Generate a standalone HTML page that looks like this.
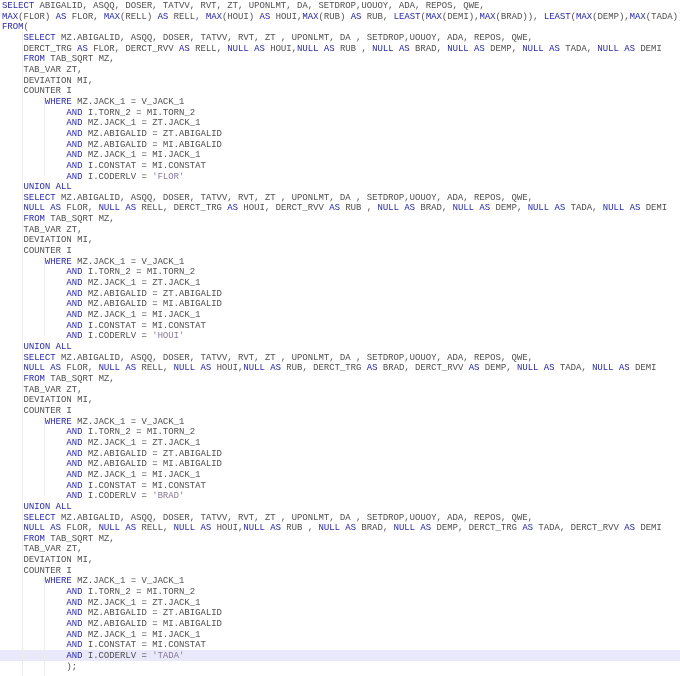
<!DOCTYPE html>
<html><head><meta charset="utf-8"><style>
html,body{margin:0;padding:0;background:#fff;width:680px;height:676px;overflow:hidden}
pre{margin:0;position:absolute;left:2px;top:1px;font-family:"Liberation Mono",monospace;font-size:8.95px;line-height:10.65px;color:#4f4f4f;white-space:pre}
b{font-weight:normal;color:#2a2aa8}
s{text-decoration:none;color:#8a7a9a}
.hl{position:absolute;left:0;top:650px;width:680px;height:11px;background:#e9e9fb}
.g{position:absolute;width:1px;background:#ececec}
</style></head><body>
<div class="hl"></div>
<div class="g" style="left:22px;top:32px;height:644px"></div>
<div class="g" style="left:44px;top:96px;height:80px"></div>
<div class="g" style="left:44px;top:256px;height:80px"></div>
<div class="g" style="left:44px;top:416px;height:80px"></div>
<div class="g" style="left:44px;top:576px;height:100px"></div>
<pre><b>SELECT</b> ABIGALID, ASQQ, DOSER, TATVV, RVT, ZT, UPONLMT, DA, SETDROP,UOUOY, ADA, REPOS, QWE,
<b>MAX</b>(FLOR) <b>AS</b> FLOR, <b>MAX</b>(RELL) <b>AS</b> RELL, <b>MAX</b>(HOUI) <b>AS</b> HOUI,<b>MAX</b>(RUB) <b>AS</b> RUB, <b>LEAST</b>(<b>MAX</b>(DEMI),<b>MAX</b>(BRAD)), <b>LEAST</b>(<b>MAX</b>(DEMP),<b>MAX</b>(TADA))
<b>FROM</b>(
    <b>SELECT</b> MZ.ABIGALID, ASQQ, DOSER, TATVV, RVT, ZT , UPONLMT, DA , SETDROP,UOUOY, ADA, REPOS, QWE,
    DERCT_TRG <b>AS</b> FLOR, DERCT_RVV <b>AS</b> RELL, <b>NULL AS</b> HOUI,<b>NULL AS</b> RUB , <b>NULL AS</b> BRAD, <b>NULL AS</b> DEMP, <b>NULL AS</b> TADA, <b>NULL AS</b> DEMI
    <b>FROM</b> TAB_SQRT MZ,
    TAB_VAR ZT,
    DEVIATION MI,
    COUNTER I
        <b>WHERE</b> MZ.JACK_1 = V_JACK_1
            <b>AND</b> I.TORN_2 = MI.TORN_2
            <b>AND</b> MZ.JACK_1 = ZT.JACK_1
            <b>AND</b> MZ.ABIGALID = ZT.ABIGALID
            <b>AND</b> MZ.ABIGALID = MI.ABIGALID
            <b>AND</b> MZ.JACK_1 = MI.JACK_1
            <b>AND</b> I.CONSTAT = MI.CONSTAT
            <b>AND</b> I.CODERLV = <s>'FLOR'</s>
    <b>UNION ALL</b>
    <b>SELECT</b> MZ.ABIGALID, ASQQ, DOSER, TATVV, RVT, ZT , UPONLMT, DA , SETDROP,UOUOY, ADA, REPOS, QWE,
    <b>NULL AS</b> FLOR, <b>NULL AS</b> RELL, DERCT_TRG <b>AS</b> HOUI, DERCT_RVV <b>AS</b> RUB , <b>NULL AS</b> BRAD, <b>NULL AS</b> DEMP, <b>NULL AS</b> TADA, <b>NULL AS</b> DEMI
    <b>FROM</b> TAB_SQRT MZ,
    TAB_VAR ZT,
    DEVIATION MI,
    COUNTER I
        <b>WHERE</b> MZ.JACK_1 = V_JACK_1
            <b>AND</b> I.TORN_2 = MI.TORN_2
            <b>AND</b> MZ.JACK_1 = ZT.JACK_1
            <b>AND</b> MZ.ABIGALID = ZT.ABIGALID
            <b>AND</b> MZ.ABIGALID = MI.ABIGALID
            <b>AND</b> MZ.JACK_1 = MI.JACK_1
            <b>AND</b> I.CONSTAT = MI.CONSTAT
            <b>AND</b> I.CODERLV = <s>'HOUI'</s>
    <b>UNION ALL</b>
    <b>SELECT</b> MZ.ABIGALID, ASQQ, DOSER, TATVV, RVT, ZT , UPONLMT, DA , SETDROP,UOUOY, ADA, REPOS, QWE,
    <b>NULL AS</b> FLOR, <b>NULL AS</b> RELL, <b>NULL AS</b> HOUI,<b>NULL AS</b> RUB, DERCT_TRG <b>AS</b> BRAD, DERCT_RVV <b>AS</b> DEMP, <b>NULL AS</b> TADA, <b>NULL AS</b> DEMI
    <b>FROM</b> TAB_SQRT MZ,
    TAB_VAR ZT,
    DEVIATION MI,
    COUNTER I
        <b>WHERE</b> MZ.JACK_1 = V_JACK_1
            <b>AND</b> I.TORN_2 = MI.TORN_2
            <b>AND</b> MZ.JACK_1 = ZT.JACK_1
            <b>AND</b> MZ.ABIGALID = ZT.ABIGALID
            <b>AND</b> MZ.ABIGALID = MI.ABIGALID
            <b>AND</b> MZ.JACK_1 = MI.JACK_1
            <b>AND</b> I.CONSTAT = MI.CONSTAT
            <b>AND</b> I.CODERLV = <s>'BRAD'</s>
    <b>UNION ALL</b>
    <b>SELECT</b> MZ.ABIGALID, ASQQ, DOSER, TATVV, RVT, ZT , UPONLMT, DA , SETDROP,UOUOY, ADA, REPOS, QWE,
    <b>NULL AS</b> FLOR, <b>NULL AS</b> RELL, <b>NULL AS</b> HOUI,<b>NULL AS</b> RUB , <b>NULL AS</b> BRAD, <b>NULL AS</b> DEMP, DERCT_TRG <b>AS</b> TADA, DERCT_RVV <b>AS</b> DEMI
    <b>FROM</b> TAB_SQRT MZ,
    TAB_VAR ZT,
    DEVIATION MI,
    COUNTER I
        <b>WHERE</b> MZ.JACK_1 = V_JACK_1
            <b>AND</b> I.TORN_2 = MI.TORN_2
            <b>AND</b> MZ.JACK_1 = ZT.JACK_1
            <b>AND</b> MZ.ABIGALID = ZT.ABIGALID
            <b>AND</b> MZ.ABIGALID = MI.ABIGALID
            <b>AND</b> MZ.JACK_1 = MI.JACK_1
            <b>AND</b> I.CONSTAT = MI.CONSTAT
            <b>AND</b> I.CODERLV = <s>'TADA'</s>
            );</pre>
</body></html>
